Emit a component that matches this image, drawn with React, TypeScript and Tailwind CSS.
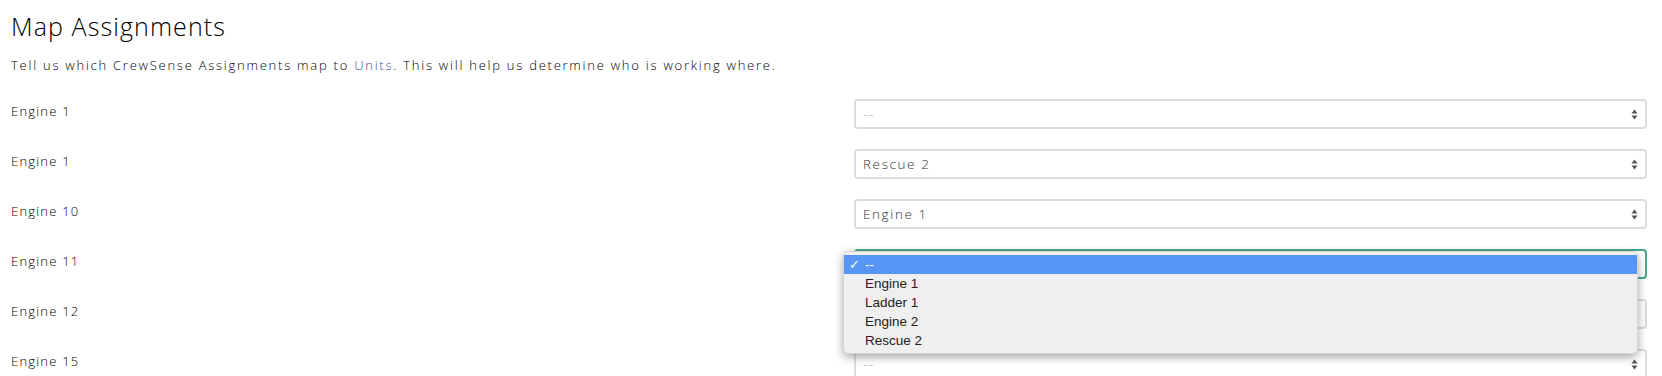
const ROWS = [
  { label: "Engine 1", value: "" },
  { label: "Engine 1", value: "Rescue 2" },
  { label: "Engine 10", value: "Engine 1" },
  { label: "Engine 11", value: "", open: true },
  { label: "Engine 12", value: "", covered: true },
  { label: "Engine 15", value: "" },
];

const OPTIONS = ["--", "Engine 1", "Ladder 1", "Engine 2", "Rescue 2"];

function Arrows() {
  return (
    <svg width="7" height="11" viewBox="0 0 7 11" className="shrink-0">
      <path d="M3.5 0.5L6.5 4.5H0.5z" fill="#555" />
      <path d="M3.5 10.5L6.5 6.5H0.5z" fill="#555" />
    </svg>
  );
}

function Popup() {
  return (
    <div className="absolute left-[-11px] top-[2px] z-10 w-[795px] rounded-[5px] bg-[#efefef] py-[3px] shadow-[0_3px_10px_rgba(0,0,0,0.35)] border border-[#d4d4d4] font-['Liberation_Sans',Arial,sans-serif] text-[13.5px] leading-[19px] text-[#222] tracking-normal">
      {OPTIONS.map((o, i) => (
        <div key={i} className={"flex h-[19px] items-center " + (i === 0 ? "bg-[#5896f5] text-white" : "")}>
          <span className="w-[21px] pl-[5px] text-[13px]">{i === 0 ? "✓" : ""}</span>
          <span>{o}</span>
        </div>
      ))}
    </div>
  );
}

export default function App() {
  return (
    <div className="h-[376px] overflow-hidden bg-white pl-[11px] pr-[15px] pt-[9px] font-['Open_Sans',sans-serif] text-black">
      <h1 className="text-[25px] leading-[34px] font-light tracking-[1.1px]">Map Assignments</h1>
      <p className="mt-[12px] text-[13px] leading-5 font-light tracking-[1.75px]">
        Tell us which CrewSense Assignments map to <span className="text-[#3f4f9a]">Units</span>. This will help us determine who is working where.
      </p>
      <div className="mt-[24px] flex flex-col gap-[20px]">
        {ROWS.map((r, i) => (
          <div key={i} className="flex items-start">
            <div className="flex-1 pt-[2px] text-[13px] leading-5 font-light tracking-[1.2px] text-black">{r.label}</div>
            <div className="relative w-[793px]">
              <div
                className={
                  "flex h-[30px] items-center justify-between rounded-[4px] border-2 bg-white pl-[7px] pr-[7px] text-[13.5px] font-light tracking-[1.6px] " +
                  (r.open ? "border-[#4aa88a]" : "border-[#dcdcdc]")
                }
              >
                <span className={r.value ? "text-[#333]" : "text-[#aaa]"}>{r.open || r.covered ? "" : r.value || "--"}</span>
                <Arrows />
              </div>
              {r.open && <Popup />}
            </div>
          </div>
        ))}
      </div>
    </div>
  );
}
